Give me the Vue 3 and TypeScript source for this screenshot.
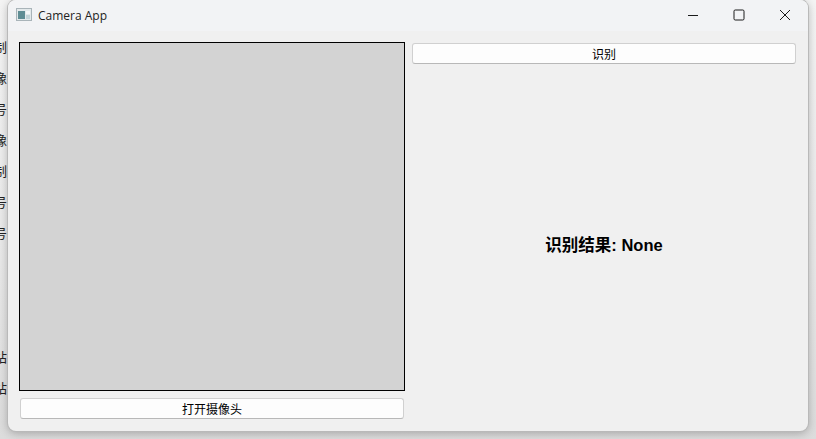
<script setup lang="ts">
const behind: string[] = ['制作', '像素', '号码', '像素', '制作', '号码', '号码', '', '', '', '站计', '站计']
</script>

<template>
  <div class="desktop">
    <ul class="behind">
      <li v-for="(t, i) in behind" :key="i" class="behind-row">{{ t }}</li>
    </ul>
    <section class="window">
      <header class="titlebar">
        <svg class="app-icon" width="16" height="13" viewBox="0 0 16 13">
          <rect x="0.5" y="0.5" width="15" height="12" fill="#e3e9eb" stroke="#a9b4b9" />
          <rect x="2" y="3" width="7" height="8" fill="#5f8d94" />
          <rect x="10" y="3" width="4" height="3" fill="#f4f7f8" />
          <rect x="10" y="7" width="4" height="4" fill="#c3d4d8" />
        </svg>
        <span class="title">Camera App</span>
        <div class="controls">
          <span class="control">
            <svg width="12" height="12" viewBox="0 0 12 12"><path d="M1 6.5h10" stroke="#1a1a1a" fill="none" /></svg>
          </span>
          <span class="control">
            <svg width="12" height="12" viewBox="0 0 12 12"><rect x="1" y="1" width="10" height="10" rx="1.2" stroke="#1a1a1a" fill="none" /></svg>
          </span>
          <span class="control">
            <svg width="12" height="12" viewBox="0 0 12 12"><path d="M1 1l10 10M11 1L1 11" stroke="#1a1a1a" fill="none" /></svg>
          </span>
        </div>
      </header>
      <main class="content">
        <div class="column">
          <div class="viewport"></div>
          <button class="btn" type="button">打开摄像头</button>
        </div>
        <div class="column">
          <button class="btn" type="button">识别</button>
          <div class="result">识别结果: None</div>
        </div>
      </main>
    </section>
  </div>
</template>

<style>
html, body { margin: 0; background: #d9d9d9; overflow: hidden; }
</style>

<style scoped>
.desktop {
  width: 816px;
  height: 439px;
  display: flex;
  align-items: flex-start;
  overflow: hidden;
  background: linear-gradient(#f4f4f4, #e8e8e8 60%, #dcdcdc);
  font-family: "Noto Sans CJK SC", sans-serif;
}
.behind {
  width: 8px;
  flex: none;
  margin: 0;
  padding: 31px 0 0;
  list-style: none;
  overflow: hidden;
}
.behind-row {
  height: 31px;
  line-height: 31px;
  font-size: 13px;
  white-space: nowrap;
  text-indent: -6px;
  color: #222;
}
.window {
  position: relative;
  z-index: 1;
  width: 800px;
  height: 431px;
  flex: none;
  display: flex;
  flex-direction: column;
  box-sizing: border-box;
  border-radius: 8px;
  overflow: hidden;
  background: #f0f0f0;
  box-shadow: 0 0 0 1px #b9b9b9, 0 2px 10px rgba(0, 0, 0, 0.28);
}
.titlebar {
  height: 31px;
  flex: none;
  display: flex;
  align-items: center;
  background: #f2f3f5;
  padding-left: 8px;
}
.app-icon { flex: none; margin-top: -2px; }
.title {
  margin-left: 6px;
  font: 12px "Open Sans", sans-serif;
  color: #222;
  margin-top: -1px;
}
.controls { margin-left: auto; display: flex; margin-top: -2px; }
.control {
  width: 46px;
  height: 29px;
  display: flex;
  align-items: center;
  justify-content: center;
}
.content {
  flex: 1;
  min-height: 0;
  display: grid;
  grid-template-columns: 386px 386px;
  gap: 6px;
  padding: 11px;
}
.column { display: flex; flex-direction: column; gap: 6px; min-height: 0; }
.viewport {
  flex: 1;
  box-sizing: border-box;
  background: #d3d3d3;
  border: 1px solid #000;
}
.btn {
  height: 21px;
  margin: 1px;
  padding: 0;
  flex: none;
  box-sizing: border-box;
  background: #fdfdfd;
  border: 1px solid #d0d0d0;
  border-bottom-color: #b8b8b8;
  border-radius: 3px;
  color: #000;
  font: 12px/19px "Noto Sans CJK SC", sans-serif;
}
.result {
  flex: 1;
  display: flex;
  align-items: center;
  justify-content: center;
  padding-bottom: 4px;
  font: 700 16.5px "Liberation Sans", "Noto Sans CJK SC", sans-serif;
  color: #000;
}
</style>
